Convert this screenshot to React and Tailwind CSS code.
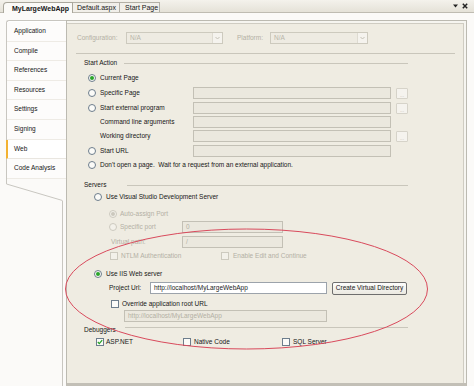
import React from 'react';

function Radio({ checked, disabled }) {
  return (
    <span
      className={`w-[8px] h-[8px] rounded-full border flex items-center justify-center shrink-0 ${
        disabled ? 'border-[#cdcabf] bg-[#f3f1ea]' : 'border-[#6d7d8c] bg-[#fbfbf8]'
      }`}
    >
      {checked && (
        <span className={`w-[4px] h-[4px] rounded-full ${disabled ? 'bg-[#cbc8bd]' : 'bg-[#2aa52a]'}`} />
      )}
    </span>
  );
}

function Check({ checked, disabled }) {
  return (
    <span
      className={`w-[8px] h-[8px] border flex items-center justify-center shrink-0 ${
        disabled ? 'border-[#cdcabf] bg-[#f3f1ea]' : 'border-[#6d7d8c] bg-[#fbfbf8]'
      }`}
    >
      {checked && (
        <svg width="6" height="6" viewBox="0 0 6 6">
          <path d="M0.8 3 L2.3 4.6 L5.2 1.2" fill="none" stroke="#21a121" strokeWidth="1.2" />
        </svg>
      )}
    </span>
  );
}

function Box({ className, children, white }) {
  return (
    <div
      className={`h-[12px] border flex items-center px-[3px] shrink-0 ${
        white ? 'bg-white border-[#9ca3ab] text-[#1b1b1b]' : 'bg-[#ebe8de] border-[#c3c0b5] text-[#b3b0a4]'
      } ${className}`}
    >
      {children}
    </div>
  );
}

function Dots() {
  return (
    <div className="ml-[5px] w-[12px] h-[11px] border border-[#d6d3c9] bg-[#f5f3ee] rounded-[1px] flex items-end justify-center text-[5px] leading-[6px] text-[#bdbaaf]">
      ...
    </div>
  );
}

function Select({ className }) {
  return (
    <div className={`h-[12px] border border-[#cdcabe] bg-[#eeebe2] flex items-center ${className}`}>
      <span className="flex-1 pl-[3px] text-[#b8b5a9]">N/A</span>
      <span className="w-[10px] h-[10px] bg-[#f5f3ee] border-l border-[#dedbd1] flex items-center justify-center">
        <svg width="5" height="4" viewBox="0 0 5 4">
          <path d="M0.5 1 L2.5 3 L4.5 1" fill="none" stroke="#c4c1b6" strokeWidth="1" />
        </svg>
      </span>
    </div>
  );
}

function Group({ label, labelW, className, lineClass = '' }) {
  return (
    <div className={`ml-[17px] w-[324px] flex items-center h-[12px] ${className}`}>
      <span className={`shrink-0 ${labelW}`}>{label}</span>
      <div className={`flex-1 h-[1px] bg-[#c9c6bb] ${lineClass}`} />
    </div>
  );
}

const navItems = ['Application', 'Compile', 'References', 'Resources', 'Settings', 'Signing', 'Web', 'Code Analysis'];

export default function App() {
  return (
    <div className="w-[474px] h-[386px] relative overflow-hidden bg-[#fbfaf8] flex flex-col font-['Liberation_Sans',Arial,sans-serif] text-[6.5px] leading-none text-[#161616]">
      {/* document tabs */}
      <div className="h-[13px] shrink-0 flex items-end bg-gradient-to-b from-[#f4f2ec] to-[#e5e2d8] border-b border-[#bfbcb2]">
        <div className="ml-[3px] h-[11px] pl-[8px] pr-[3px] flex items-center bg-[#fbfaf7] border-t border-l border-r border-[#aaa79c] rounded-tl-[4px] font-bold text-[7px] -mb-[1px]">
          MyLargeWebApp
        </div>
        <div className="h-[10px] pl-[4px] pr-[2px] w-[47px] flex items-center bg-[#f1efe9] border-t border-r border-[#b3b0a6] text-[7px]">
          Default.aspx
        </div>
        <div className="h-[10px] pl-[5px] w-[40px] flex items-center bg-[#f1efe9] border-t border-r border-[#b3b0a6] text-[7px]">
          Start Page
        </div>
        <div className="ml-auto mr-[6px] self-center flex items-center gap-[4px]">
          <svg width="5" height="4" viewBox="0 0 5 4">
            <path d="M0 0.5 H5 L2.5 3.5 Z" fill="#222" />
          </svg>
          <svg width="6" height="6" viewBox="0 0 6 6">
            <path d="M0.8 0.8 L5.2 5.2 M5.2 0.8 L0.8 5.2" stroke="#222" strokeWidth="1.5" />
          </svg>
        </div>
      </div>

      <div className="flex flex-1 pt-[7px] pr-[7px] min-h-0">
        {/* left page tabs */}
        <div className="w-[66px] shrink-0 flex flex-col pl-[6px]">
          <div className="border-l border-t border-[#c8c6c0] rounded-tl-[3px] bg-white pt-[1px]">
            {navItems.map((item) =>
              item === 'Web' ? (
                <div
                  key={item}
                  className="h-[19.6px] flex items-center pl-[6px] -ml-[1px] border-l-2 border-l-[#f3b232] border-b border-b-[#e9e6e0] bg-white"
                >
                  {item}
                </div>
              ) : (
                <div key={item} className="h-[19.6px] flex items-center pl-[7px] border-b border-[#eeebe5] bg-[#fdfcfb]">
                  {item}
                </div>
              )
            )}
          </div>
          <svg width="60" height="22" viewBox="0 0 60 22" className="shrink-0">
            <path d="M0 0 H60 V22 H57 L0.5 5 Z" fill="#fbfaf8" />
            <path d="M0.5 0 V5 L56.5 21.5" fill="none" stroke="#c8c6c0" strokeWidth="1" />
          </svg>
          <div className="w-[57px] flex-1 border-r border-[#c8c6c0]" />
        </div>

        {/* property page */}
        <div className="flex-1 border border-b-[3px] border-[#bcbab1] border-b-[#c2bfb6] bg-[#f6f5f0] pt-[2px] pr-[2px]">
          <div className="h-full border-t border-r border-[#cfccc2] bg-[#efece2] flex flex-col pt-[8px]">
            <div className="flex items-center h-[12px] ml-[10px] text-[#b3b0a4]">
              <span className="w-[49px]">Configuration:</span>
              <Select className="w-[97px]" />
              <span className="ml-[14px] w-[33px]">Platform:</span>
              <Select className="w-[98px]" />
            </div>
            <div className="mt-[9px] ml-[9px] w-[379px] h-[1px] bg-[#c9c6bb]" />

            <Group label="Start Action" labelW="w-[40px]" className="mt-[3px]" />
            <div className="mt-[3px] ml-[21px] flex items-center h-[12px]">
              <Radio checked />
              <span className="ml-[4px]">Current Page</span>
            </div>
            <div className="mt-[3px] ml-[21px] flex items-center h-[12px]">
              <div className="w-[105px] flex items-center">
                <Radio />
                <span className="ml-[4px]">Specific Page</span>
              </div>
              <Box className="w-[198px]" />
              <Dots />
            </div>
            <div className="mt-[3px] ml-[21px] flex items-center h-[12px]">
              <div className="w-[105px] flex items-center">
                <Radio />
                <span className="ml-[4px]">Start external program</span>
              </div>
              <Box className="w-[198px]" />
              <Dots />
            </div>
            <div className="mt-[2px] ml-[21px] flex items-center h-[12px]">
              <span className="w-[105px] pl-[12px]">Command line arguments</span>
              <Box className="w-[198px]" />
            </div>
            <div className="mt-[2px] ml-[21px] flex items-center h-[12px]">
              <span className="w-[105px] pl-[12px]">Working directory</span>
              <Box className="w-[198px]" />
              <Dots />
            </div>
            <div className="mt-[3px] ml-[21px] flex items-center h-[12px]">
              <div className="w-[105px] flex items-center">
                <Radio />
                <span className="ml-[4px]">Start URL</span>
              </div>
              <Box className="w-[198px]" />
            </div>
            <div className="mt-[2px] ml-[21px] flex items-center h-[12px]">
              <Radio />
              <span className="ml-[4px] whitespace-pre">Don't open a page.  Wait for a request from an external application.</span>
            </div>

            <Group label="Servers" labelW="w-[43px]" className="mt-[8px]" />
            <div className="ml-[27px] flex items-center h-[12px]">
              <Radio />
              <span className="ml-[4px]">Use Visual Studio Development Server</span>
            </div>
            <div className="mt-[5px] ml-[42px] flex items-center h-[12px] text-[#b3b0a4]">
              <Radio checked disabled />
              <span className="ml-[3px]">Auto-assign Port</span>
            </div>
            <div className="mt-[1px] ml-[42px] flex items-center h-[12px] text-[#b3b0a4]">
              <div className="w-[73px] flex items-center">
                <Radio disabled />
                <span className="ml-[3px]">Specific port</span>
              </div>
              <Box className="w-[101px]">0</Box>
            </div>
            <div className="mt-[3px] ml-[42px] flex items-center h-[12px] text-[#b3b0a4]">
              <span className="w-[73px] pl-[2px]">Virtual path:</span>
              <Box className="w-[101px]">/</Box>
            </div>
            <div className="mt-[2px] ml-[43px] flex items-center h-[12px] text-[#b3b0a4]">
              <div className="w-[111px] flex items-center">
                <Check disabled />
                <span className="ml-[3px]">NTLM Authentication</span>
              </div>
              <Check disabled />
              <span className="ml-[4px]">Enable Edit and Continue</span>
            </div>
            <div className="mt-[6px] ml-[27px] flex items-center h-[12px]">
              <Radio checked />
              <span className="ml-[4px]">Use IIS Web server</span>
            </div>
            <div className="mt-[2px] ml-[42px] flex items-center h-[12px]">
              <span className="w-[41px]">Project Url:</span>
              <Box white className="w-[177px]">http://localhost/MyLargeWebApp</Box>
              <div className="ml-[5px] w-[75px] h-[13px] border border-[#6e6e6e] rounded-[2px] bg-gradient-to-b from-[#fdfdfb] to-[#ebe9e1] flex items-center justify-center">
                Create Virtual Directory
              </div>
            </div>
            <div className="mt-[4px] ml-[44px] flex items-center h-[12px]">
              <Check />
              <span className="ml-[3px]">Override application root URL</span>
            </div>
            <div className="ml-[57px] flex items-center h-[12px]">
              <Box className="w-[203px]">http://localhost/MyLargeWebApp</Box>
            </div>

            <Group label="Debuggers" labelW="w-[41px]" className="mt-[2px]" lineClass="-mt-[5px]" />
            <div className="ml-[29px] flex items-center h-[12px]">
              <div className="w-[87px] flex items-center">
                <Check checked />
                <span className="ml-[2px]">ASP.NET</span>
              </div>
              <div className="w-[99px] flex items-center">
                <Check />
                <span className="ml-[3px]">Native Code</span>
              </div>
              <Check />
              <span className="ml-[3px]">SQL Server</span>
            </div>
          </div>
        </div>
      </div>

      {/* red annotation ellipse */}
      <svg className="absolute inset-0 pointer-events-none" width="474" height="386" viewBox="0 0 474 386">
        <ellipse cx="246.5" cy="289" rx="181" ry="60" fill="none" stroke="#d94a5c" strokeWidth="1" />
      </svg>
    </div>
  );
}
